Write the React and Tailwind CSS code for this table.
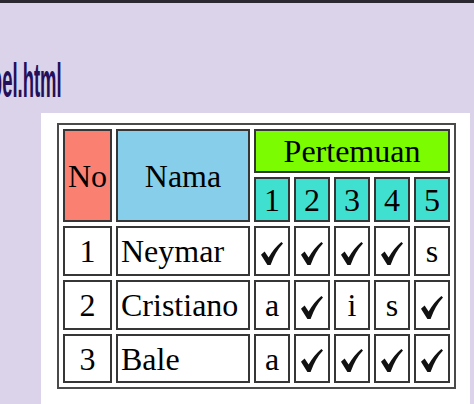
const rows = [
  { no: 1, nama: 'Neymar', hadir: ['v', 'v', 'v', 'v', 's'] },
  { no: 2, nama: 'Cristiano', hadir: ['a', 'v', 'i', 's', 'v'] },
  { no: 3, nama: 'Bale', hadir: ['a', 'v', 'v', 'v', 'v'] },
];

const rowHeights = ['h-[50px]', 'h-[50px]', 'h-[49px]'];

// centang tebal ala font sistem
function Check() {
  return (
    <svg width="22" height="23" viewBox="0 0 22 23" className="mx-auto mt-[4px] block">
      <path d="M0 12.8 L3.6 9.6 L7.6 15.6 Q13 6 20.4 0 L22 1.6 Q14.6 9.2 9.6 23 L6.4 23 Z" fill="#111" />
    </svg>
  );
}

function Mark({ v }) {
  if (v === 'v') return <Check />;
  return <span>{v}</span>;
}

export default function App() {
  const cell = 'border-2 border-[#363636] p-0';
  return (
    <div className="w-[474px] h-[404px] overflow-hidden bg-[#dbd3ea] flex flex-col">
      <div className="h-[3px] bg-[#2c2832]" />

      {/* judul file, terpotong di kiri */}
      <div className="mt-[54px] w-[62px] flex justify-end">
        <span className="whitespace-nowrap text-[48px] leading-[48px] font-bold text-[#24105a] font-['Liberation_Sans',sans-serif] scale-x-[0.385] origin-right inline-block">
          tabel.html
        </span>
      </div>

      <div className="mt-[8px] ml-[41px] w-[429px] flex-1 bg-white">
        <table className="mt-[10px] ml-[16px] border-2 border-[#4a4a4a] border-separate border-spacing-[4px] font-['Liberation_Serif',serif] text-[32px] leading-none text-black">
          <thead>
            <tr>
              <th rowSpan={2} className={`${cell} w-[49px] bg-[#fa8072] font-normal`}>No</th>
              <th rowSpan={2} className={`${cell} w-[134px] bg-[#87ceeb] font-normal`}>Nama</th>
              <th colSpan={5} className={`${cell} h-[44px] bg-[#7cfc00] font-normal`}>Pertemuan</th>
            </tr>
            <tr>
              {[1, 2, 3, 4, 5].map((n) => (
                <th key={n} className={`${cell} w-[36px] h-[45px] bg-[#40e0d0] font-normal`}>
                  {n}
                </th>
              ))}
            </tr>
          </thead>
          <tbody>
            {rows.map((r, i) => (
              <tr key={r.no}>
                <td className={`${cell} ${rowHeights[i]} text-center`}>{r.no}</td>
                <td className={`${cell} pl-[3px] text-left`}>{r.nama}</td>
                {r.hadir.map((h, j) => (
                  <td key={j} className={`${cell} text-center`}>
                    <Mark v={h} />
                  </td>
                ))}
              </tr>
            ))}
          </tbody>
        </table>
      </div>
    </div>
  );
}
